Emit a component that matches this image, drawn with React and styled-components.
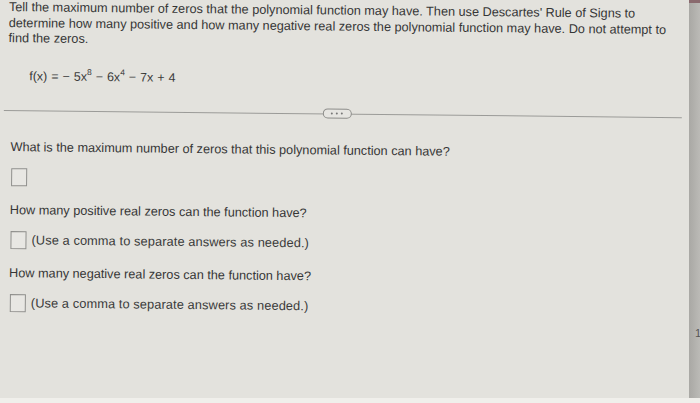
import styled, { createGlobalStyle } from "styled-components"

const GlobalStyle = createGlobalStyle`
  html, body {
    margin: 0;
    padding: 0;
    background: #e3e2dd;
  }
  body {
    font-family: "Liberation Sans", Arial, sans-serif;
    color: #383838;
  }
`

export default function App() {
  return (
    <Page>
      <GlobalStyle />
      <Panel>
        <Question>
          Tell the maximum number of zeros that the polynomial function may have. Then use Descartes' Rule of Signs to
          determine how many positive and how many negative real zeros the polynomial function may have. Do not attempt to
          find the zeros.
        </Question>
        <Formula>
          f(x) = − 5x<sup>8</sup> − 6x<sup>4</sup> − 7x + 4
        </Formula>
        <Divider>
          <Pill>
            <i />
            <i />
            <i />
          </Pill>
        </Divider>
        <Answers>
          <Prompt>What is the maximum number of zeros that this polynomial function can have?</Prompt>
          <AnswerRow>
            <AnswerBox />
          </AnswerRow>
          <Prompt>How many positive real zeros can the function have?</Prompt>
          <AnswerRow>
            <AnswerBox />
            <Hint>(Use a comma to separate answers as needed.)</Hint>
          </AnswerRow>
          <Prompt>How many negative real zeros can the function have?</Prompt>
          <AnswerRow>
            <AnswerBox />
            <Hint>(Use a comma to separate answers as needed.)</Hint>
          </AnswerRow>
        </Answers>
      </Panel>
      <SideStrip>
        <span>1</span>
      </SideStrip>
    </Page>
  )
}

const Page = styled.div`
  display: flex;
  width: 700px;
  height: 403px;
  overflow: hidden;
  background: #e3e2dd;
  border-bottom: 5px solid #f0efeb;
  box-sizing: border-box;
`

const Panel = styled.div`
  flex: 1;
  padding: 0 6px 0 9px;
  transform: rotate(0.6deg);
  transform-origin: 0 0;
`

const Question = styled.p`
  margin: 0;
  padding-top: 0;
  font-size: 12.7px;
  line-height: 15.5px;
  color: #363636;
`

const Formula = styled.div`
  margin: 22px 0 0 21px;
  font-size: 12.5px;
  color: #3a3a3a;
  word-spacing: 0.5px;

  sup {
    font-size: 8.5px;
    vertical-align: 6px;
    line-height: 0;
  }
`

const Divider = styled.div`
  position: relative;
  display: flex;
  justify-content: center;
  align-items: center;
  margin: 27px 0 0 -4px;
  width: 678px;
  height: 1px;
  background: #9b9b98;
`

const Pill = styled.div`
  display: flex;
  justify-content: center;
  align-items: center;
  gap: 3px;
  width: 27px;
  height: 8px;
  margin-left: -12px;
  border: 1px solid #8d8d8a;
  border-radius: 5px;
  background: #e6e5e1;

  i {
    width: 2px;
    height: 2px;
    background: #777;
    border-radius: 1px;
  }
`

const Answers = styled.div`
  display: flex;
  flex-direction: column;
  padding: 28px 0 0 3px;
`

const Prompt = styled.div`
  font-size: 12.7px;
  line-height: 16px;
  color: #363636;
`

const AnswerRow = styled.div`
  display: flex;
  align-items: center;
  gap: 5px;
  margin: 13px 0 16px 1px;
`

const AnswerBox = styled.div`
  width: 14px;
  height: 16px;
  border: 1px solid #8f8f8c;
  background: #e8e7e3;
`

const Hint = styled.span`
  font-size: 12.8px;
  color: #3a3a3a;
  letter-spacing: 0.1px;
`

const SideStrip = styled.div`
  width: 12px;
  background: linear-gradient(to right, #a9a8a4, #bdbcb8);
  padding-top: 324px;
  box-sizing: border-box;
  border-top: 3px solid #8a6a6e;

  span {
    display: block;
    padding-left: 6px;
    font-size: 11px;
    color: #555;
  }
`
